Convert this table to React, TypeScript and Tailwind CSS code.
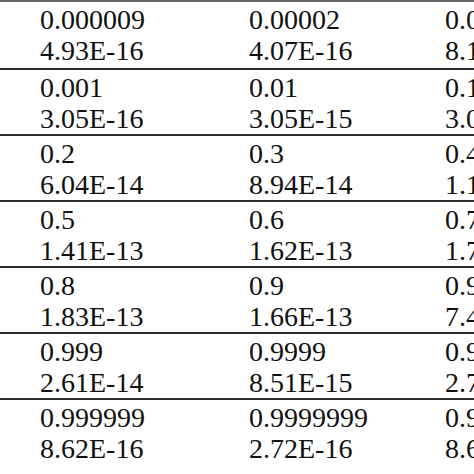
const rows: [string, string][][] = [
  [["0.000009", "4.93E-16"], ["0.00002", "4.07E-16"], ["0.0001", "8.12E-16"]],
  [["0.001", "3.05E-16"], ["0.01", "3.05E-15"], ["0.1", "3.05E-14"]],
  [["0.2", "6.04E-14"], ["0.3", "8.94E-14"], ["0.4", "1.17E-13"]],
  [["0.5", "1.41E-13"], ["0.6", "1.62E-13"], ["0.7", "1.76E-13"]],
  [["0.8", "1.83E-13"], ["0.9", "1.66E-13"], ["0.99", "7.45E-14"]],
  [["0.999", "2.61E-14"], ["0.9999", "8.51E-15"], ["0.99999", "2.72E-15"]],
  [["0.999999", "8.62E-16"], ["0.9999999", "2.72E-16"], ["0.99999999", "8.62E-17"]],
];

export default function App() {
  return (
    <div className="w-[474px] h-[474px] overflow-hidden bg-white text-[#111] font-['Liberation_Serif','DejaVu_Serif',serif]">
      <div className="h-[2px] bg-[#666]" />
      {rows.map((row, i) => (
        <div
          key={i}
          className={
            "grid grid-cols-[209px_196px_1fr] pl-[40px] whitespace-nowrap text-[28px] leading-[31px] " +
            (i === 0 ? "h-[66px] pt-[2px]" : "h-[66px] pt-[2px] border-t-2 border-[#2a2a2a]")
          }
        >
          {row.map((cell, j) => (
            <div key={j} className="flex flex-col overflow-hidden">
              <span>{cell[0]}</span>
              <span>{cell[1]}</span>
            </div>
          ))}
        </div>
      ))}
    </div>
  );
}
